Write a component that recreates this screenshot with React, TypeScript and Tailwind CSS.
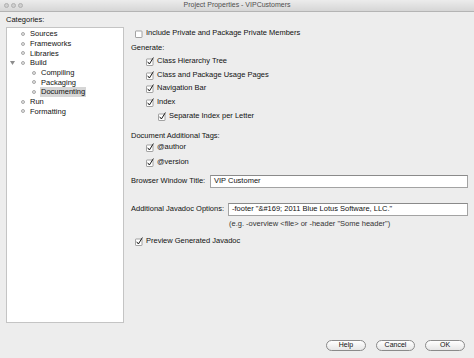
import React from 'react';

const Check: React.FC<{ checked?: boolean }> = ({ checked }) => (
  <svg width="9" height="9" viewBox="0 0 9 9" className="shrink-0">
    <rect x="0.5" y="2" width="6.5" height="6.5" rx="0.6" fill="#ffffff" stroke="#7e7e7e" strokeWidth="0.7" />
    {checked && <path d="M1.9 5.1 L3.4 7 L7.2 0.9" stroke="#1a1a1a" strokeWidth="1" fill="none" strokeLinecap="round" />}
  </svg>
);

const Bullet: React.FC = () => (
  <span className="w-[4px] h-[4px] rounded-full border border-[#a9a9a9] bg-[#e4e4e4] shrink-0" />
);

type TreeRow = { label: string; child?: boolean; open?: boolean; selected?: boolean };

const tree: TreeRow[] = [
  { label: 'Sources' },
  { label: 'Frameworks' },
  { label: 'Libraries' },
  { label: 'Build', open: true },
  { label: 'Compiling', child: true },
  { label: 'Packaging', child: true },
  { label: 'Documenting', child: true, selected: true },
  { label: 'Run' },
  { label: 'Formatting' },
];

const CheckRow: React.FC<{ label: string; className: string; checked?: boolean }> = ({ label, className, checked = true }) => (
  <div className={`h-[10px] flex items-center gap-[2px] ${className}`}>
    <Check checked={checked} />
    <span>{label}</span>
  </div>
);

const MacButton: React.FC<{ label: string; w: string }> = ({ label, w }) => (
  <div className={`${w} h-[11px] rounded-full border border-[#8a8a8a] bg-gradient-to-b from-[#ffffff] to-[#e6e6e6] flex items-center justify-center text-[7px] text-[#111]`}>
    {label}
  </div>
);

export default function App() {
  return (
    <div className="w-[474px] h-[358px] bg-[#ededed] flex flex-col font-['Liberation_Sans',Arial,sans-serif] text-[7.5px] text-[#111] overflow-hidden">
      {/* title bar */}
      <div className="h-[12px] shrink-0 relative flex items-center justify-center bg-gradient-to-b from-[#ececec] to-[#d6d6d6] border-b border-[#b4b4b4]">
        <div className="absolute left-[4px] top-[3px] flex gap-[2px]">
          <span className="w-[5px] h-[5px] rounded-full bg-[#cfcfcf] border border-[#b0b0b0]" />
          <span className="w-[5px] h-[5px] rounded-full bg-[#cfcfcf] border border-[#b0b0b0]" />
          <span className="w-[5px] h-[5px] rounded-full bg-[#cfcfcf] border border-[#b0b0b0]" />
        </div>
        <span className="text-[7px] text-[#4e4e4e]">Project Properties - VIPCustomers</span>
      </div>

      <div className="flex h-[311px] shrink-0">
        {/* categories */}
        <div className="w-[124px] pl-[6px] shrink-0 flex flex-col">
          <div className="h-[10px] leading-[10px] mt-[3px]">Categories:</div>
          <div className="mt-[2px] h-[296px] bg-white border border-[#c4c4c4] pt-[1px]">
            {tree.map((r) => (
              <div key={r.label} className="h-[9.7px] flex items-center relative">
                {r.open && (
                  <svg width="5" height="4" viewBox="0 0 5 4" className="absolute left-[3px] top-[3px]">
                    <path d="M0 0 L5 0 L2.5 4 Z" fill="#8c8c8c" />
                  </svg>
                )}
                <div className={`flex items-center gap-[5px] ${r.child ? 'pl-[25px]' : 'pl-[14px]'}`}>
                  <Bullet />
                  <span className={r.selected ? 'bg-[#d6d6d6] px-[1px] -ml-[1px] leading-[10px]' : ''}>{r.label}</span>
                </div>
              </div>
            ))}
          </div>
        </div>

        {/* options */}
        <div className="flex-1 pl-[7px] pr-[6px] flex flex-col">
          <CheckRow label="Include Private and Package Private Members" checked={false} className="mt-[16px] pl-[4px]" />
          <div className="h-[10px] leading-[10px] mt-[5px]">Generate:</div>
          <CheckRow label="Class Hierarchy Tree" className="mt-[3px] pl-[15px]" />
          <CheckRow label="Class and Package Usage Pages" className="mt-[4px] pl-[15px]" />
          <CheckRow label="Navigation Bar" className="mt-[3px] pl-[15px]" />
          <CheckRow label="Index" className="mt-[4px] pl-[15px]" />
          <CheckRow label="Separate Index per Letter" className="mt-[4px] pl-[27px]" />
          <div className="h-[10px] leading-[10px] mt-[10px]">Document Additional Tags:</div>
          <CheckRow label="@author" className="mt-[1px] pl-[15px]" />
          <CheckRow label="@version" className="mt-[5px] pl-[15px]" />
          <div className="h-[13px] mt-[7.5px] flex items-center">
            <span className="w-[79px] shrink-0">Browser Window Title:</span>
            <div className="flex-1 h-[13px] bg-white border border-[#a3a3a3] border-t-[#8a8a8a] flex items-center pl-[3px]">VIP Customer</div>
          </div>
          <div className="h-[13px] mt-[15px] flex items-center">
            <span className="w-[97px] shrink-0">Additional Javadoc Options:</span>
            <div className="flex-1 h-[13px] bg-white border border-[#a3a3a3] border-t-[#8a8a8a] flex items-center pl-[3px]">-footer "&amp;#169; 2011 Blue Lotus Software, LLC."</div>
          </div>
          <div className="h-[10px] leading-[10px] mt-[3.5px] pl-[98px] text-[#333]">(e.g. -overview &lt;file&gt; or -header "Some header")</div>
          <CheckRow label="Preview Generated Javadoc" className="mt-[7px] pl-[4px]" />
        </div>
      </div>

      {/* buttons */}
      <div className="mt-[16.5px] flex justify-end gap-[10px] pr-[9px]">
        <MacButton label="Help" w="w-[40px]" />
        <MacButton label="Cancel" w="w-[39px]" />
        <MacButton label="OK" w="w-[40px]" />
      </div>
    </div>
  );
}
